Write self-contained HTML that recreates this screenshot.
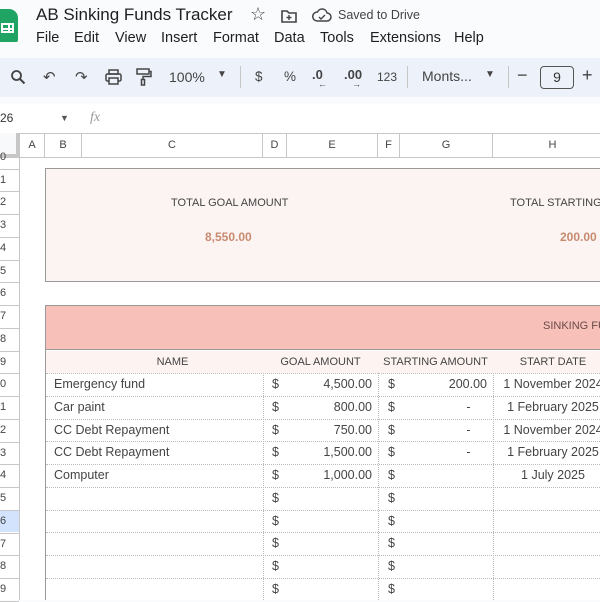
<!DOCTYPE html>
<html><head><style>
*{margin:0;padding:0;box-sizing:border-box}
body{width:600px;height:600px;overflow:hidden;background:#f9fbfd;font-family:"Liberation Sans",Arial,sans-serif;position:relative;color:#1f1f1f}
.a{position:absolute;white-space:nowrap}
.m{font-size:14.5px;color:#1f1f1f}
.t{font-size:13.5px;color:#444}
.hl{position:absolute;background:#c7c7c7}
.rh{position:absolute;left:0;width:19px;font-size:11px;color:#444;text-align:left;padding-left:0}
.ch{position:absolute;top:133px;height:24px;line-height:24px;font-size:11px;color:#444;text-align:center;border-right:1px solid #c7c7c7}
.c{position:absolute;font-size:12.5px;color:#444;height:23px;line-height:23px}
.dl{position:absolute;border-top:1px dotted #bbb;left:46px;width:554px;height:0}
.dv{position:absolute;border-left:1px dotted #bbb;width:0}
</style></head><body>
<div class="a" style="left:-3px;top:9px;width:21px;height:33px;background:#1fa463;border-radius:2px 9px 2px 2px"></div>
<div class="a" style="left:1px;top:23px;width:13px;height:10px;border:2px solid #fff;background:linear-gradient(#fff,#fff) 5px 0/2px 100% no-repeat,linear-gradient(#fff,#fff) 0 3px/100% 2px no-repeat"></div>
<div class="a" style="left:36px;top:5px;font-size:17px;color:#1f1f1f">AB Sinking Funds Tracker</div>
<div class="a" style="left:250px;top:4px;font-size:18px;color:#444">☆</div>
<svg class="a" style="left:280px;top:8px" width="18" height="16" viewBox="0 0 18 16"><path d="M2 3h5l2 2h7v9H2z" fill="none" stroke="#444" stroke-width="1.6"/><path d="M9 7v5M6.5 9.5H11.5" stroke="#444" stroke-width="1.4"/></svg>
<svg class="a" style="left:312px;top:8px" width="20" height="15" viewBox="0 0 20 15"><path d="M5 13h10a4 4 0 0 0 0-8 5 5 0 0 0-9.5-1A4.5 4.5 0 0 0 5 13z" fill="none" stroke="#444" stroke-width="1.5"/><path d="M7 9l2 2 4-4" fill="none" stroke="#444" stroke-width="1.4"/></svg>
<div class="a" style="left:338px;top:8px;font-size:12.5px;color:#444">Saved to Drive</div>
<div class="a m" style="left:36px;top:30px">File</div>
<div class="a m" style="left:74px;top:30px">Edit</div>
<div class="a m" style="left:115px;top:30px">View</div>
<div class="a m" style="left:161px;top:30px">Insert</div>
<div class="a m" style="left:213px;top:30px">Format</div>
<div class="a m" style="left:274px;top:30px">Data</div>
<div class="a m" style="left:320px;top:30px">Tools</div>
<div class="a m" style="left:370px;top:30px">Extensions</div>
<div class="a m" style="left:454px;top:30px">Help</div>
<div class="a" style="left:-20px;top:58px;width:640px;height:39px;background:#edf2fa;border-radius:20px"></div>
<svg class="a" style="left:10px;top:69px" width="16" height="16" viewBox="0 0 16 16"><circle cx="6.5" cy="6.5" r="4.5" fill="none" stroke="#444" stroke-width="1.8"/><path d="M10 10l4.5 4.5" stroke="#444" stroke-width="2"/></svg>
<div class="a t" style="left:43px;top:68px;font-size:15px">↶</div>
<div class="a t" style="left:75px;top:68px;font-size:15px">↷</div>
<svg class="a" style="left:105px;top:69px" width="17" height="16" viewBox="0 0 17 16"><rect x="4" y="1" width="9" height="4" fill="none" stroke="#444" stroke-width="1.5"/><rect x="1" y="5" width="15" height="7" rx="1.5" fill="none" stroke="#444" stroke-width="1.5"/><rect x="4" y="9" width="9" height="6" fill="#edf2fa" stroke="#444" stroke-width="1.5"/></svg>
<svg class="a" style="left:136px;top:68px" width="16" height="18" viewBox="0 0 16 18"><rect x="1" y="1" width="12" height="5" fill="none" stroke="#444" stroke-width="1.5"/><path d="M13 3.5h2v5H7v3" fill="none" stroke="#444" stroke-width="1.5"/><rect x="5.5" y="11.5" width="3" height="5.5" fill="none" stroke="#444" stroke-width="1.5"/></svg>
<div class="a t" style="left:169px;top:69px;font-size:14px">100%</div>
<div class="a t" style="left:217px;top:69px;font-size:10px">▼</div>
<div class="a" style="left:240px;top:66px;width:1px;height:22px;background:#c7c7c7"></div>
<div class="a t" style="left:255px;top:69px">$</div>
<div class="a t" style="left:284px;top:69px">%</div>
<div class="a t" style="left:312px;top:67px;font-size:13px;font-weight:bold">.0</div>
<div class="a t" style="left:318px;top:79px;font-size:9px">←</div>
<div class="a t" style="left:344px;top:67px;font-size:13px;font-weight:bold">.00</div>
<div class="a t" style="left:352px;top:79px;font-size:9px">→</div>
<div class="a t" style="left:377px;top:70px;font-size:12px">123</div>
<div class="a" style="left:407px;top:66px;width:1px;height:22px;background:#c7c7c7"></div>
<div class="a t" style="left:422px;top:68px;font-size:14px">Monts...</div>
<div class="a t" style="left:485px;top:69px;font-size:10px">▼</div>
<div class="a" style="left:508px;top:66px;width:1px;height:22px;background:#c7c7c7"></div>
<div class="a t" style="left:517px;top:65px;font-size:18px">−</div>
<div class="a" style="left:540px;top:66px;width:34px;height:23px;border:1px solid #555;border-radius:4px;text-align:center;line-height:21px;font-size:14px;color:#333">9</div>
<div class="a t" style="left:582px;top:65px;font-size:18px">+</div>
<div class="a" style="left:0;top:104px;width:600px;height:29px;background:#fff"></div>
<div class="a" style="left:0;top:111px;font-size:12px;color:#333">26</div>
<div class="a" style="left:60px;top:113px;font-size:9px;color:#555">▼</div>
<div class="a" style="left:90px;top:110px;font-size:14px;color:#999;font-style:italic;font-family:'Liberation Serif',serif">fx</div>
<div class="a" style="left:0;top:133px;width:600px;height:467px;background:#fff"></div>
<div class="hl" style="left:0;top:133px;width:600px;height:1px"></div>
<div class="hl" style="left:0;top:157px;width:600px;height:1px"></div>
<div class="hl" style="left:19px;top:133px;width:1px;height:467px"></div>
<div class="a" style="left:0;top:133px;width:19px;height:24px;background:#f8f9fa;border-right:3px solid #c7c7c7;border-bottom:3px solid #c7c7c7"></div>
<div class="ch" style="left:20px;width:25px">A</div>
<div class="ch" style="left:45px;width:37px">B</div>
<div class="ch" style="left:82px;width:181px">C</div>
<div class="ch" style="left:263px;width:24px">D</div>
<div class="ch" style="left:287px;width:91px">E</div>
<div class="ch" style="left:378px;width:22px">F</div>
<div class="ch" style="left:400px;width:93px">G</div>
<div class="ch" style="left:493px;width:120px">H</div>
<div class="a" style="left:0;top:510px;width:19px;height:22px;background:#d3e3fd"></div>
<div id="rows"></div>
<script>
var s='';for(var k=0;k<=19;k++){var y=168.5+(k-1)*22.75;var lab=String(k%10);s+='<div class="rh" style="top:'+(y+5)+'px">'+lab+'</div><div class="hl" style="left:0;width:19px;top:'+Math.round(y+22.75)+'px;height:1px"></div>';}
document.getElementById('rows').innerHTML=s;
</script>
<div class="a" style="left:45px;top:168px;width:570px;height:114px;background:#fbf4f2;border:1px solid #999"></div>
<div class="a" style="left:171px;top:197px;font-size:11px;color:#444">TOTAL GOAL AMOUNT</div>
<div class="a" style="left:205px;top:230px;font-size:12px;color:#c88a6f;font-weight:bold">8,550.00</div>
<div class="a" style="left:510px;top:197px;font-size:11px;color:#444">TOTAL STARTING</div>
<div class="a" style="left:560px;top:230px;font-size:12px;color:#c88a6f;font-weight:bold">200.00</div>
<div class="a" style="left:45px;top:305px;width:570px;height:295px;border-left:1px solid #999;border-top:1px solid #999"></div>
<div class="a" style="left:46px;top:306px;width:560px;height:44px;background:#f7c1b9;border-bottom:1px solid #999"></div>
<div class="a" style="left:543px;top:320px;font-size:11px;color:#6a4a48">SINKING FU</div>
<div class="a" style="left:46px;top:351px;width:560px;height:22px;background:#fdf4f1"></div>
<div class="c" style="left:82px;width:181px;top:351px;text-align:center;font-size:11px">NAME</div>
<div class="c" style="left:263px;width:115px;top:351px;text-align:center;font-size:11px">GOAL AMOUNT</div>
<div class="c" style="left:378px;width:115px;top:351px;text-align:center;font-size:11px">STARTING AMOUNT</div>
<div class="c" style="left:493px;width:120px;top:351px;text-align:center;font-size:11px">START DATE</div>
<div id="tb"></div>
<script>
var d=[["Emergency fund","4,500.00","200.00","1 November 2024"],["Car paint","800.00","-","1 February 2025"],["CC Debt Repayment","750.00","-","1 November 2024"],["CC Debt Repayment","1,500.00","-","1 February 2025"],["Computer","1,000.00","","1 July 2025"],["","","",""],["","","",""],["","","",""],["","","",""],["","","",""]];
var h='';
for(var i=0;i<10;i++){var y=Math.round(373+i*22.75);var r=d[i];
h+='<div class="dl" style="top:'+y+'px"></div>';
h+='<div class="c" style="left:54px;top:'+y+'px">'+r[0]+'</div>';
h+='<div class="c" style="left:272px;top:'+y+'px">$</div><div class="c" style="left:290px;width:82px;text-align:right;top:'+y+'px">'+r[1]+'</div>';
h+='<div class="c" style="left:388px;top:'+y+'px">$</div><div class="c" style="left:400px;width:87px;text-align:'+(r[2]=='-'?'center;padding-left:50px':'right')+';top:'+y+'px">'+r[2]+'</div>';
h+='<div class="c" style="left:493px;width:120px;text-align:center;top:'+y+'px">'+r[3]+'</div>';}
[263,378,493].forEach(function(x){h+='<div class="dv" style="left:'+x+'px;top:373px;height:227px"></div>'});
document.getElementById('tb').innerHTML=h;
</script>
</body></html>
